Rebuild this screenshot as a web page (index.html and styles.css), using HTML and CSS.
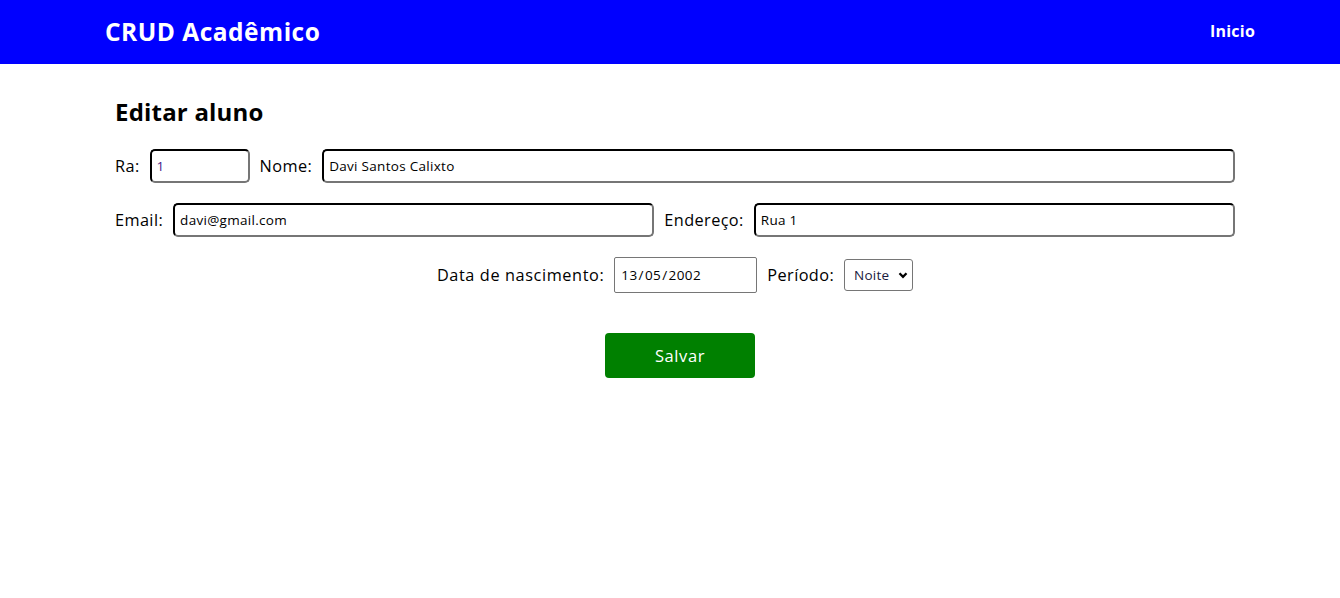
FILE: index.html
```html
<!DOCTYPE html>
<html lang="pt-BR">
<head>
<meta charset="utf-8">
<title>CRUD Acadêmico</title>
<link rel="stylesheet" href="styles.css">
</head>
<body>
<header class="topbar">
  <div class="topbar-inner">
    <span class="brand">CRUD Acadêmico</span>
    <a class="nav-link" href="#">Inicio</a>
  </div>
</header>
<main class="content">
  <h2 class="title">Editar aluno</h2>
  <form class="form">
    <div class="row">
      <label class="lbl">Ra:</label>
      <input class="field field-ra" type="text" value="1">
      <label class="lbl">Nome:</label>
      <input class="field field-grow" type="text" value="Davi Santos Calixto">
    </div>
    <div class="row">
      <label class="lbl">Email:</label>
      <input class="field field-grow" type="text" value="davi@gmail.com">
      <label class="lbl">Endereço:</label>
      <input class="field field-grow" type="text" value="Rua 1">
    </div>
    <div class="row row-center">
      <label class="lbl lbl-date">Data de nascimento:</label>
      <div class="date-box"><span>13</span>/<span>05</span>/<span>2002</span></div>
      <label class="lbl">Período:</label>
      <div class="select-box"><span>Noite</span><svg class="chev" viewBox="0 0 10 10" width="10" height="10"><path d="M1.5 3.2 L5 6.8 L8.5 3.2" fill="none" stroke="#000" stroke-width="2.3"/></svg></div>
    </div>
    <div class="actions">
      <button class="btn" type="button">Salvar</button>
    </div>
  </form>
</main>
</body>
</html>
```
FILE: styles.css
```css
* { box-sizing: border-box; }
body {
  margin: 0;
  font-family: "Open Sans", "Liberation Sans", sans-serif;
  color: #000;
  background: #fff;
}
.topbar {
  background: #0000ff;
  height: 64px;
}
.topbar-inner {
  height: 64px;
  padding: 0 85px 0 105px;
  display: flex;
  align-items: center;
  justify-content: space-between;
}
.brand {
  color: #fff;
  font-weight: 700;
  font-size: 24.5px;
  letter-spacing: 0.5px;
  margin-top: -2px;
}
.nav-link {
  color: #fff;
  font-weight: 700;
  font-size: 16px;
  letter-spacing: 0.2px;
  text-decoration: none;
  margin-top: -2px;
}
.content {
  width: 1120px;
  margin-left: 115px;
  padding-top: 30px;
}
.title {
  margin: 0 0 19px;
  font-size: 24px;
  font-weight: 700;
  letter-spacing: 0.2px;
  line-height: 36px;
}
.form {
  display: flex;
  flex-direction: column;
  gap: 20px;
}
.row {
  display: flex;
  align-items: center;
  gap: 10px;
  font-size: 16.3px;
  letter-spacing: 0.4px;
}
.row-center { justify-content: center; }
.lbl { white-space: nowrap; }
.lbl-date { letter-spacing: 0.6px; }
.field {
  height: 34px;
  border: 2px inset #767676;
  border-top-color: #1a1a1a;
  border-left-color: #1a1a1a;
  border-bottom-color: #767676;
  border-right-color: #767676;
  border-radius: 5px;
  padding: 0 5px;
  font-family: inherit;
  font-size: 13.5px;
  letter-spacing: 0.3px;
  color: #000;
  background: #fff;
  outline: none;
}
.field-ra { width: 100px; color: #4a1a8a; }
.field-grow { flex: 1; min-width: 0; }
.date-box {
  width: 143px;
  height: 36px;
  border: 1px solid #767676;
  border-radius: 2px;
  display: flex;
  align-items: center;
  padding-left: 6px;
  font-size: 13.5px;
  letter-spacing: 0.4px;
  gap: 1px;
}
.select-box {
  width: 69px;
  height: 32px;
  border: 1px solid #767676;
  border-radius: 3px;
  display: flex;
  align-items: center;
  justify-content: space-between;
  padding: 0 4px 0 9px;
  font-size: 13.5px;
  letter-spacing: 0.2px;
  color: #1a1a40;
}
.actions {
  display: flex;
  justify-content: center;
  margin-top: 20px;
  padding-left: 10px;
}
.btn {
  width: 150px;
  height: 45px;
  background: #008000;
  color: #fff;
  border: none;
  border-radius: 4px;
  font-family: inherit;
  font-size: 16.5px;
  letter-spacing: 0.6px;
  cursor: pointer;
}
```
